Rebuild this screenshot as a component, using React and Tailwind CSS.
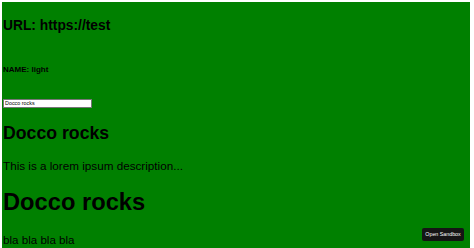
import { useState } from "react";

const App = () => {
  const [title, setTitle] = useState("Docco rocks");

  return (
    <div className="h-[248px] overflow-hidden bg-white font-['Liberation_Sans',Arial,sans-serif] text-black">
      {/* Page body */}
      <div className="ml-[2px] mr-[4px] mt-[2px] flex h-[246px] flex-col items-start bg-[#008000] pl-[1px]">
        <h3 className="mt-[17px] text-[13.8px] font-bold leading-none">
          URL: https://test
        </h3>
        <h6 className="mt-[33px] text-[8px] font-bold leading-none">
          NAME: light
        </h6>
        <input
          className="mt-[25px] h-[9px] w-[89px] border border-[#767676] bg-white px-[1px] text-[5.4px] leading-none outline-none"
          value={title}
          onChange={(e) => setTitle(e.target.value)}
        />
        <h2 className="mt-[17px] text-[17.7px] font-bold leading-none">
          {title}
        </h2>
        <p className="mt-[17.4px] text-[11.7px] leading-none">
          This is a lorem ipsum description...
        </p>
        <h1 className="mt-[19px] text-[23.7px] font-bold leading-none">
          {title}
        </h1>
        <p className="mt-[19.5px] shrink-0 text-[11.6px] leading-none">
          bla bla bla bla
        </p>
      </div>

      {/* Sandbox button */}
      <button className="fixed bottom-[7px] right-[10px] flex h-[13px] w-[42px] items-center justify-center rounded-[2px] bg-[#151515] text-[5.3px] leading-none text-white">
        Open Sandbox
      </button>
    </div>
  );
};

export default App;
